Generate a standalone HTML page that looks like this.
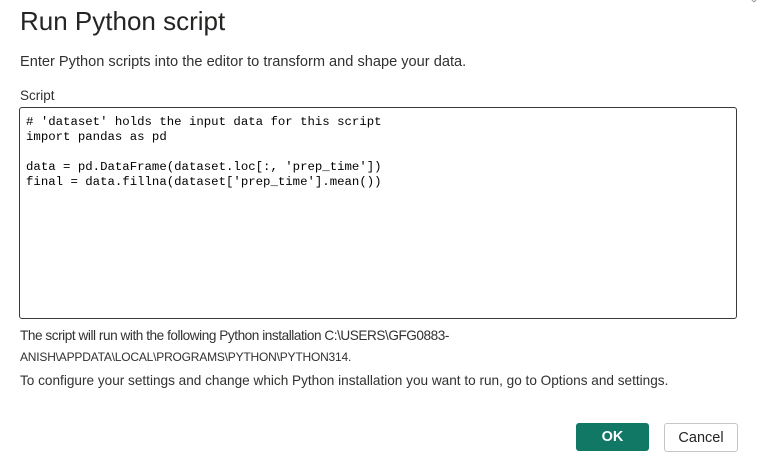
<!DOCTYPE html>
<html><head><style>
body{margin:0;width:768px;height:466px;background:#fff;font-family:"Liberation Sans",sans-serif;color:#252423;position:relative;overflow:hidden}
div,pre{position:absolute;margin:0}
div{white-space:nowrap}
.t{left:20px;top:6px;font-size:26px;color:#252423}
.s{left:20px;top:54px;font-size:14.6px;color:#323130}
.l{left:20px;top:88px;font-size:13.5px;color:#323130}
.ed{left:19px;top:107px;width:716px;height:210px;border:1.5px solid #3b3a39;border-radius:3px}
pre{left:26px;top:115px;font-family:"Liberation Mono",monospace;font-size:12.35px;line-height:15px;color:#000;white-space:pre}
.p{left:20px;font-size:13.6px;color:#323130}
.b{top:423px;height:28px;border-radius:3px;font-size:14.5px;font-weight:bold;display:flex;align-items:center;justify-content:center}
</style></head><body>
<div class="t">Run Python script</div>
<svg style="position:absolute;left:746px;top:0" width="14" height="6"><path d="M1 -5 L8 2 M8 2 L15 -5" stroke="#999" stroke-width="1" fill="none"/></svg>
<div class="s">Enter Python scripts into the editor to transform and shape your data.</div>
<div class="l">Script</div>
<div class="ed"></div>
<pre># 'dataset' holds the input data for this script
import pandas as pd

data = pd.DataFrame(dataset.loc[:, 'prep_time'])
final = data.fillna(dataset['prep_time'].mean())</pre>
<div class="p" style="top:328px;font-size:13.6px;letter-spacing:-0.45px">The script will run with the following Python installation C:\USERS\GFG0883-</div>
<div class="p" style="top:350px;font-size:12px;letter-spacing:-0.2px">ANISH\APPDATA\LOCAL\PROGRAMS\PYTHON\PYTHON314.</div>
<div class="p" style="top:373px">To configure your settings and change which Python installation you want to run, go to Options and settings.</div>
<div class="b" style="left:576px;width:73px;background:#117865;color:#fff">OK</div>
<div class="b" style="left:664px;width:72px;border:1px solid #c8c6c4;color:#252423;height:27px;font-weight:normal">Cancel</div>
</body></html>
